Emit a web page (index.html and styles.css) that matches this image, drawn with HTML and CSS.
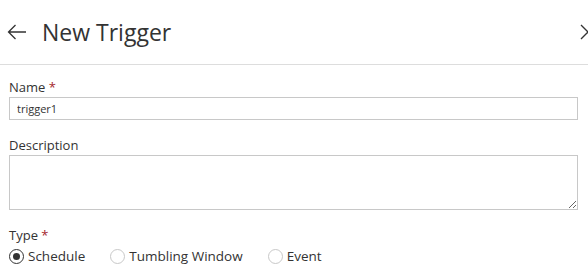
FILE: index.html
```html
<!DOCTYPE html>
<html lang="en">
<head>
    <meta charset="UTF-8">
    <title>New Trigger</title>
    <link rel="stylesheet" href="styles.css">
</head>
<body>
    <div class="panel">
        <div class="header">
            <button class="back" aria-label="Back">
                <svg width="20" height="16" viewBox="0 0 20 16"><path d="M19 8H1.5M8.5 1L1.5 8l7 7" fill="none" stroke="#333" stroke-width="1.3"/></svg>
            </button>
            <h1>New Trigger</h1>
            <button class="close" aria-label="Close">
                <svg width="16" height="16" viewBox="0 0 16 16"><path d="M1 1l14 14M15 1L1 15" fill="none" stroke="#333" stroke-width="1.3"/></svg>
            </button>
        </div>
        <div class="form">
            <div class="field">
                <label>Name <span class="req">*</span></label>
                <input type="text" value="trigger1">
            </div>
            <div class="field">
                <label>Description</label>
                <textarea></textarea>
            </div>
            <div class="field">
                <label>Type <span class="req">*</span></label>
                <div class="radios">
                    <label class="radio"><span class="dot checked"></span>Schedule</label>
                    <label class="radio"><span class="dot"></span>Tumbling Window</label>
                    <label class="radio"><span class="dot"></span>Event</label>
                </div>
            </div>
        </div>
    </div>
</body>
</html>
```

FILE: styles.css
```css
body {
    margin: 0;
    font-family: "Open Sans", "Noto Sans", sans-serif;
    color: #333;
    background: #fff;
    overflow: hidden;
}
.panel {
    width: 600px;
}
.header {
    display: flex;
    align-items: center;
    height: 64px;
    border-bottom: 1px solid #ddd;
}
.header button {
    background: none;
    border: none;
    padding: 0;
    display: flex;
    cursor: pointer;
}
.back {
    margin-left: 7px;
    margin-right: 15px;
}
.header h1 {
    margin: 0;
    font-size: 23px;
    font-weight: 400;
    flex: 1;
}
.close {
    margin-right: 4px;
}
.form {
    padding: 14px 10px 0 9px;
}
.field {
    display: flex;
    flex-direction: column;
    margin-bottom: 17px;
}
.field > label {
    font-size: 13px;
    line-height: 17px;
    margin-bottom: 1px;
    color: #333;
}
.req {
    color: #a4262c;
}
.field input, .field textarea {
    width: 569px;
    box-sizing: border-box;
    border: 1px solid #c8c8c8;
    font-family: inherit;
    color: #333;
    outline: none;
}
.field input {
    height: 23px;
    font-size: 11px;
    padding: 0 7px;
}
.field textarea {
    height: 55px;
    resize: vertical;
}
.radios {
    display: flex;
    gap: 25px;
    margin-top: 2px;
}
.radio {
    display: flex;
    align-items: center;
    font-size: 13.5px;
    gap: 4px;
}
.dot {
    width: 15px;
    height: 15px;
    border: 1px solid #c8c8c8;
    border-radius: 50%;
    box-sizing: border-box;
    display: inline-flex;
    align-items: center;
    justify-content: center;
}
.dot.checked {
    border-color: #333;
}
.dot.checked::after {
    content: "";
    width: 7px;
    height: 7px;
    border-radius: 50%;
    background: #333;
}
```
